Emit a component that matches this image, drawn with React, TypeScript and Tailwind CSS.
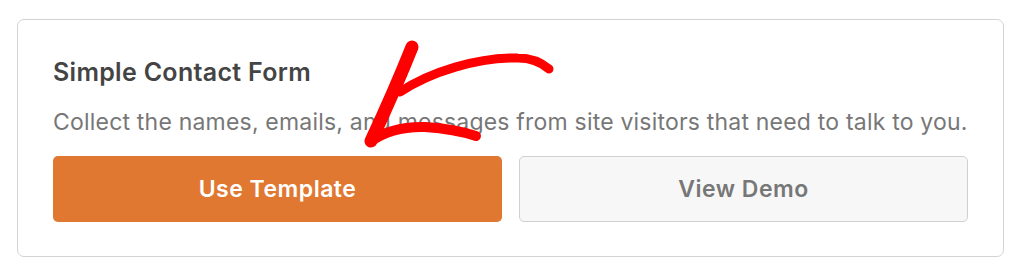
import React from "react";

export default function App() {
  return (
    <div className="relative w-[1024px] h-[280px] bg-white overflow-hidden" style={{ fontFamily: "Inter, 'Noto Sans', sans-serif" }}>
      <div className="ml-[17px] mt-[19px] w-[987px] h-[238px] border border-[#d3d3d3] rounded-[7px] bg-white px-[35px] pt-[37px]">
        <h2 className="text-[25px] leading-[30px] font-semibold tracking-[0.3px] text-[#444444]">Simple Contact Form</h2>
        <p className="mt-[21px] text-[23px] leading-[28px] tracking-[0.2px] text-[#777777]">
          Collect the names, emails, and messages from site visitors that need to talk to you.
        </p>
        <div className="mt-[20px] flex gap-[17px]">
          <button className="w-[450px] h-[66px] rounded-[5px] bg-[#e07832] text-white text-[23px] tracking-[0.5px] font-semibold">
            Use Template
          </button>
          <button className="w-[450px] h-[66px] rounded-[5px] bg-[#f7f7f7] border border-[#d0d0d0] text-[#777777] text-[23px] tracking-[0.5px] font-semibold">
            View Demo
          </button>
        </div>
      </div>
      <svg className="absolute left-0 top-0 pointer-events-none" width="1024" height="280" viewBox="0 0 1024 280">
        <g fill="none" stroke="#ff0000" strokeLinecap="round" strokeLinejoin="round">
          <path d="M412,47 Q394,92 371,141" strokeWidth="13" />
          <path d="M370,142 Q392,126 425,127 Q455,129 476,136" strokeWidth="10" />
          <path d="M400,92 C430,72 478,57 518,58 Q536,58 549,69" strokeWidth="9" />
        </g>
      </svg>
    </div>
  );
}
